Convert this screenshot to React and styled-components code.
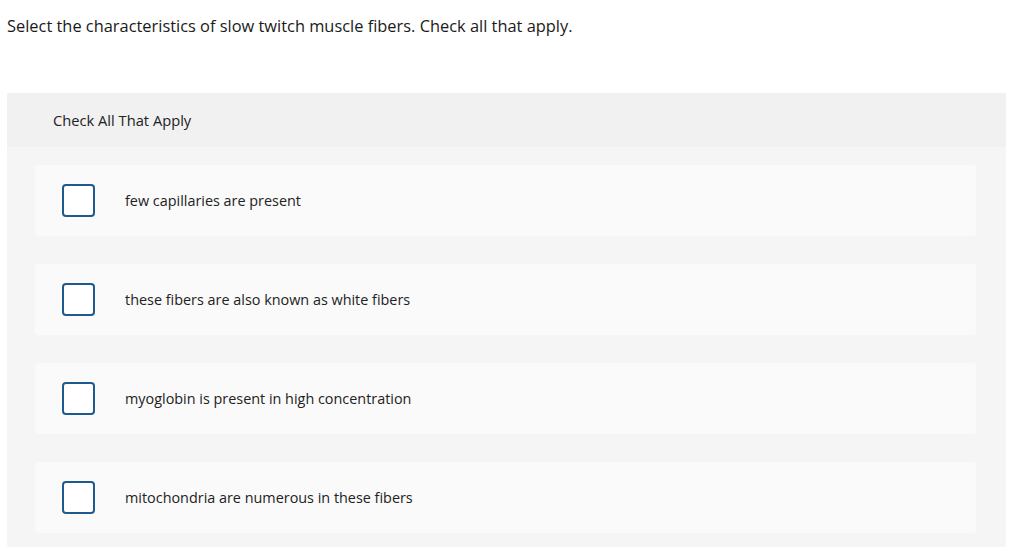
import React from "react";
import styled, { createGlobalStyle } from "styled-components";

const Global = createGlobalStyle`
  html, body { margin: 0; padding: 0; background: #fff; }
  body {
    font-family: "Open Sans", "Lato", sans-serif;
    font-variant-ligatures: none;
    color: #1a1a1a;
  }
`;

const Page = styled.div`
  padding: 15px 18px 0 7px;
`;

const Prompt = styled.p`
  margin: 0;
  font-size: 16.4px;
  line-height: 22px;
  color: #1a1a1a;
`;

const Panel = styled.section`
  margin-top: 56px;
  background: #f5f5f5;
  border-radius: 2px;
  padding-bottom: 14px;
`;

const PanelHeader = styled.div`
  height: 54px;
  display: flex;
  align-items: center;
  padding-left: 46px;
  background: #f1f1f1;
  font-size: 14.7px;
  color: #222;
`;

const List = styled.div`
  display: flex;
  flex-direction: column;
  gap: 28px;
  padding: 18px 30px 0 28px;
`;

const Item = styled.label`
  height: 71px;
  display: flex;
  align-items: center;
  gap: 30px;
  padding-left: 27px;
  background: #fafafa;
  border-radius: 4px;
  font-size: 14.4px;
  color: #222;
  cursor: pointer;
`;

const Box = styled.span`
  width: 29px;
  height: 29px;
  border: 2px solid #1f5a8e;
  border-radius: 4px;
  background: #fff;
  flex: none;
`;

const options = [
  "few capillaries are present",
  "these fibers are also known as white fibers",
  "myoglobin is present in high concentration",
  "mitochondria are numerous in these fibers",
];

export default function App() {
  return (
    <>
      <Global />
      <Page>
        <Prompt>Select the characteristics of slow twitch muscle fibers. Check all that apply.</Prompt>
        <Panel>
          <PanelHeader>Check All That Apply</PanelHeader>
          <List>
            {options.map((o) => (
              <Item key={o}>
                <Box />
                <span>{o}</span>
              </Item>
            ))}
          </List>
        </Panel>
      </Page>
    </>
  );
}
